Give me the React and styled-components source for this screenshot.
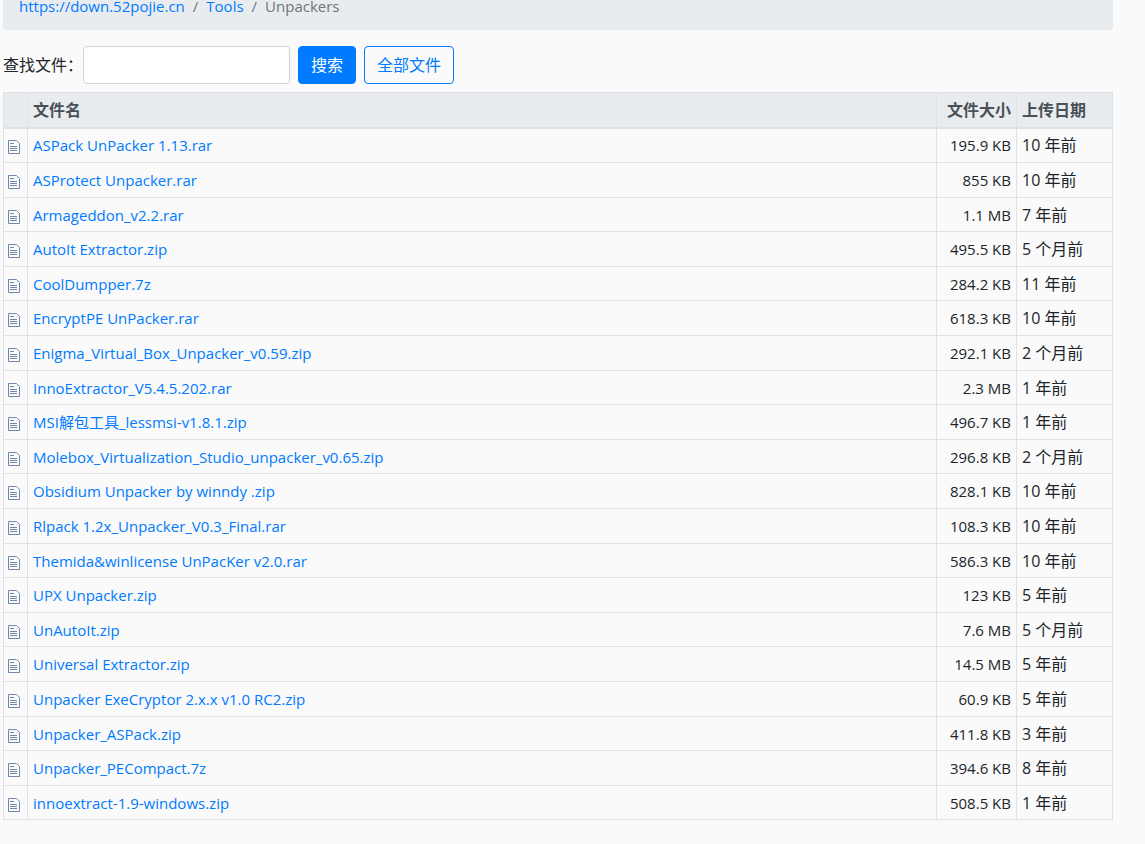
import React from 'react';
import styled, { createGlobalStyle } from 'styled-components';

const files = [
  ['ASPack UnPacker 1.13.rar', '195.9 KB', '10 年前'],
  ['ASProtect Unpacker.rar', '855 KB', '10 年前'],
  ['Armageddon_v2.2.rar', '1.1 MB', '7 年前'],
  ['AutoIt Extractor.zip', '495.5 KB', '5 个月前'],
  ['CoolDumpper.7z', '284.2 KB', '11 年前'],
  ['EncryptPE UnPacker.rar', '618.3 KB', '10 年前'],
  ['Enigma_Virtual_Box_Unpacker_v0.59.zip', '292.1 KB', '2 个月前'],
  ['InnoExtractor_V5.4.5.202.rar', '2.3 MB', '1 年前'],
  ['MSI解包工具_lessmsi-v1.8.1.zip', '496.7 KB', '1 年前'],
  ['Molebox_Virtualization_Studio_unpacker_v0.65.zip', '296.8 KB', '2 个月前'],
  ['Obsidium Unpacker by winndy .zip', '828.1 KB', '10 年前'],
  ['Rlpack 1.2x_Unpacker_V0.3_Final.rar', '108.3 KB', '10 年前'],
  ['Themida&winlicense UnPacKer v2.0.rar', '586.3 KB', '10 年前'],
  ['UPX Unpacker.zip', '123 KB', '5 年前'],
  ['UnAutoIt.zip', '7.6 MB', '5 个月前'],
  ['Universal Extractor.zip', '14.5 MB', '5 年前'],
  ['Unpacker ExeCryptor 2.x.x v1.0 RC2.zip', '60.9 KB', '5 年前'],
  ['Unpacker_ASPack.zip', '411.8 KB', '3 年前'],
  ['Unpacker_PECompact.7z', '394.6 KB', '8 年前'],
  ['innoextract-1.9-windows.zip', '508.5 KB', '1 年前'],
];

const GlobalStyle = createGlobalStyle`
  *, *::before, *::after { box-sizing: border-box; }
  body {
    margin: 0;
    background: #fafafa;
    color: #212529;
    font-family: "Open Sans", "Noto Sans CJK SC", sans-serif;
    font-size: 15px;
    line-height: 24px;
  }
`;

const Page = styled.main`
  padding: 0 32px 24px 3px;
`;

const Link = styled.a`
  color: #007bff;
  text-decoration: none;
  &:hover { text-decoration: underline; }
`;

const Breadcrumb = styled.nav`
  padding: 0 16px 18px;
  background: #e9ecef;
  border-radius: 0 0 4px 4px;
`;

const Crumbs = styled.ol`
  display: flex;
  gap: 8px;
  margin: 0;
  padding: 0;
  list-style: none;
  line-height: 12px;
`;

const Crumb = styled.li`
  display: flex;
  gap: 8px;
  color: #6c757d;
  & + &::before { content: "/"; }
`;

const SearchForm = styled.form`
  display: flex;
  align-items: center;
  gap: 8px;
  margin: 16px 0 8px;
  font-size: 16px;
`;

const Field = styled.div`
  display: flex;
  align-items: center;
`;

const SearchInput = styled.input`
  width: 207px;
  height: 38px;
  padding: 6px 12px;
  border: 1px solid #ced4da;
  border-radius: 4px;
  background: #fff;
  color: #495057;
  font: inherit;
`;

const Button = styled.button`
  height: 38px;
  padding: 0 12px;
  border: 1px solid #007bff;
  border-radius: 4px;
  background: ${(p) => (p.$primary ? '#007bff' : 'transparent')};
  color: ${(p) => (p.$primary ? '#fff' : '#007bff')};
  font: inherit;
  line-height: 24px;
  cursor: pointer;
`;

const Table = styled.table`
  width: 100%;
  table-layout: fixed;
  border-collapse: collapse;
`;

const Column = styled.col`
  width: ${(p) => p.$width || 'auto'};
`;

const HeadCell = styled.th`
  height: 35px;
  padding: 0 5px;
  border: 1px solid #dee2e6;
  border-bottom-width: 2px;
  background: #e9ecef;
  color: #495057;
  font-size: 16px;
  font-weight: 700;
  text-align: ${(p) => p.$align || 'left'};
  white-space: nowrap;
`;

const Row = styled.tr`
  height: 35px;
  &:nth-child(5n + 3), &:nth-child(5n) { height: 34px; }
`;

const Cell = styled.td`
  padding: 0 5px;
  border: 1px solid #dee2e6;
  text-align: ${(p) => p.$align || 'left'};
  white-space: nowrap;
`;

const IconCell = styled(Cell)`
  padding: 4px 4px 0;
`;

const DateCell = styled(Cell)`
  font-size: 16px;
`;

const Icon = styled.svg`
  display: block;
  width: 12px;
  height: 14px;
`;

function FileIcon() {
  return (
    <Icon viewBox="0 0 12 14" fill="none" stroke="#7188a8" aria-hidden="true">
      <path d="M.5.5H8.5L11.5 3.5V13.5H.5Z" />
      <path d="M2 3.5H6M2 6.5H9M2 8.5H9M2 10.5H9" />
    </Icon>
  );
}

export default function App() {
  return (
    <>
      <GlobalStyle />
      <Page>
        <Breadcrumb aria-label="breadcrumb">
          <Crumbs>
            <Crumb><Link href="#home">https://down.52pojie.cn</Link></Crumb>
            <Crumb><Link href="#tools">Tools</Link></Crumb>
            <Crumb aria-current="page">Unpackers</Crumb>
          </Crumbs>
        </Breadcrumb>
        <SearchForm onSubmit={(e) => e.preventDefault()}>
          <Field>
            <label htmlFor="search">查找文件：</label>
            <SearchInput id="search" type="text" />
          </Field>
          <Button $primary type="submit">搜索</Button>
          <Button type="button">全部文件</Button>
        </SearchForm>
        <Table>
          <colgroup>
            <Column $width="24px" />
            <Column />
            <Column $width="80px" />
            <Column $width="96px" />
          </colgroup>
          <thead>
            <tr>
              <HeadCell />
              <HeadCell scope="col">文件名</HeadCell>
              <HeadCell scope="col" $align="right">文件大小</HeadCell>
              <HeadCell scope="col">上传日期</HeadCell>
            </tr>
          </thead>
          <tbody>
            {files.map(([name, size, date]) => (
              <Row key={name}>
                <IconCell><FileIcon /></IconCell>
                <Cell><Link href={'#' + encodeURIComponent(name)}>{name}</Link></Cell>
                <Cell $align="right">{size}</Cell>
                <DateCell>{date}</DateCell>
              </Row>
            ))}
          </tbody>
        </Table>
      </Page>
    </>
  );
}
